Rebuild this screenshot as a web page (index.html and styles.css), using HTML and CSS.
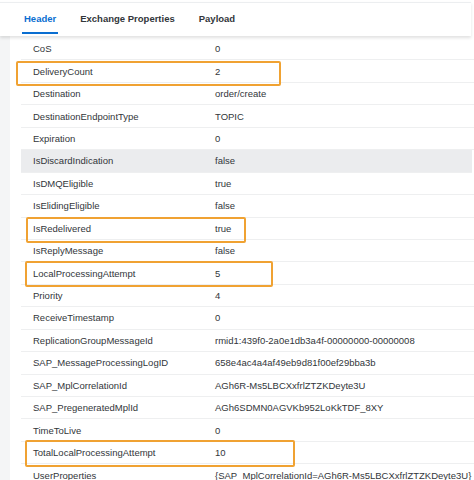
FILE: index.html
```html
<!DOCTYPE html>
<html>
<head>
<meta charset="utf-8">
<link rel="stylesheet" href="styles.css">
</head>
<body>
<div class="page">
  <div class="tabs">
    <div class="tab active">Header</div>
    <div class="tab">Exchange Properties</div>
    <div class="tab">Payload</div>
  </div>
  <div class="body">
    <div class="strip"></div>
    <div class="panel">
      <div class="row"><span class="k">CoS</span><span class="v">0</span></div>
      <div class="row"><span class="k">DeliveryCount</span><span class="v">2</span></div>
      <div class="row"><span class="k">Destination</span><span class="v">order/create</span></div>
      <div class="row"><span class="k">DestinationEndpointType</span><span class="v">TOPIC</span></div>
      <div class="row"><span class="k">Expiration</span><span class="v">0</span></div>
      <div class="row hl"><span class="k">IsDiscardIndication</span><span class="v">false</span></div>
      <div class="row"><span class="k">IsDMQEligible</span><span class="v">true</span></div>
      <div class="row"><span class="k">IsElidingEligible</span><span class="v">false</span></div>
      <div class="row"><span class="k">IsRedelivered</span><span class="v">true</span></div>
      <div class="row"><span class="k">IsReplyMessage</span><span class="v">false</span></div>
      <div class="row"><span class="k">LocalProcessingAttempt</span><span class="v">5</span></div>
      <div class="row"><span class="k">Priority</span><span class="v">4</span></div>
      <div class="row"><span class="k">ReceiveTimestamp</span><span class="v">0</span></div>
      <div class="row"><span class="k">ReplicationGroupMessageId</span><span class="v">rmid1:439f0-2a0e1db3a4f-00000000-00000008</span></div>
      <div class="row"><span class="k">SAP_MessageProcessingLogID</span><span class="v">658e4ac4a4af49eb9d81f00ef29bba3b</span></div>
      <div class="row"><span class="k">SAP_MplCorrelationId</span><span class="v">AGh6R-Ms5LBCXxfrlZTZKDeyte3U</span></div>
      <div class="row"><span class="k">SAP_PregeneratedMplId</span><span class="v">AGh6SDMN0AGVKb952LoKkTDF_8XY</span></div>
      <div class="row"><span class="k">TimeToLive</span><span class="v">0</span></div>
      <div class="row"><span class="k">TotalLocalProcessingAttempt</span><span class="v">10</span></div>
      <div class="row"><span class="k">UserProperties</span><span class="v">{SAP_MplCorrelationId=AGh6R-Ms5LBCXxfrlZTZKDeyte3U}</span></div>
    </div>
    <div class="mark m1"></div>
    <div class="mark m2"></div>
    <div class="mark m3"></div>
    <div class="mark m4"></div>
  </div>
</div>
</body>
</html>
```
FILE: styles.css
```css
* { box-sizing: border-box; }
html, body { margin: 0; padding: 0; background: #fff; }
body {
  font-family: "Liberation Sans", Arial, sans-serif;
  font-size: 9.5px;
  color: #32363a;
  width: 474px;
  height: 480px;
  overflow: hidden;
}
.page { position: relative; width: 474px; overflow: hidden; }
.tabs {
  height: 34px;
  display: flex;
  padding-left: 22px;
  border-top: 1px solid #eceef0;
  margin-top: 2px;
  box-shadow: 0 2px 3px rgba(0,0,0,0.12);
  background: #fff;
  position: relative;
  z-index: 1;
  margin-right: 3px;
}
.tab {
  font-weight: 700;
  font-size: 9.5px;
  color: #32363a;
  padding: 10px 2px 0;
  margin-right: 20px;
  height: 31px;
}
.tab.active {
  color: #0a6ed1;
  border-bottom: 2px solid #0a6ed1;
}
.body {
  position: relative;
  display: flex;
}
.strip {
  width: 10px;
  background: #f4f5f6;
  height: 460px;
  flex: none;
}
.panel {
  flex: 1;
  min-width: 0;
  padding-left: 11px;
  padding-top: 2px;
  overflow: hidden;
}
.row {
  height: 22.45px;
  display: flex;
  align-items: center;
  border-bottom: 1px solid #eeeff0;
  white-space: nowrap;
  overflow: hidden;
}
.row.hl { background: #ebecee; margin-right: 2px; }
.k { width: 194px; padding-left: 12px; flex: none; }
.v { flex: none; }
.mark {
  position: absolute;
  border: 2px solid #f0a232;
  border-radius: 2px;
}
.m1 { left: 16px; top: 25px; width: 265px; height: 25px; }
.m2 { left: 26px; top: 181px; width: 220px; height: 26px; }
.m3 { left: 25px; top: 225px; width: 248px; height: 26px; }
.m4 { left: 25px; top: 404px; width: 270px; height: 27px; }
```
